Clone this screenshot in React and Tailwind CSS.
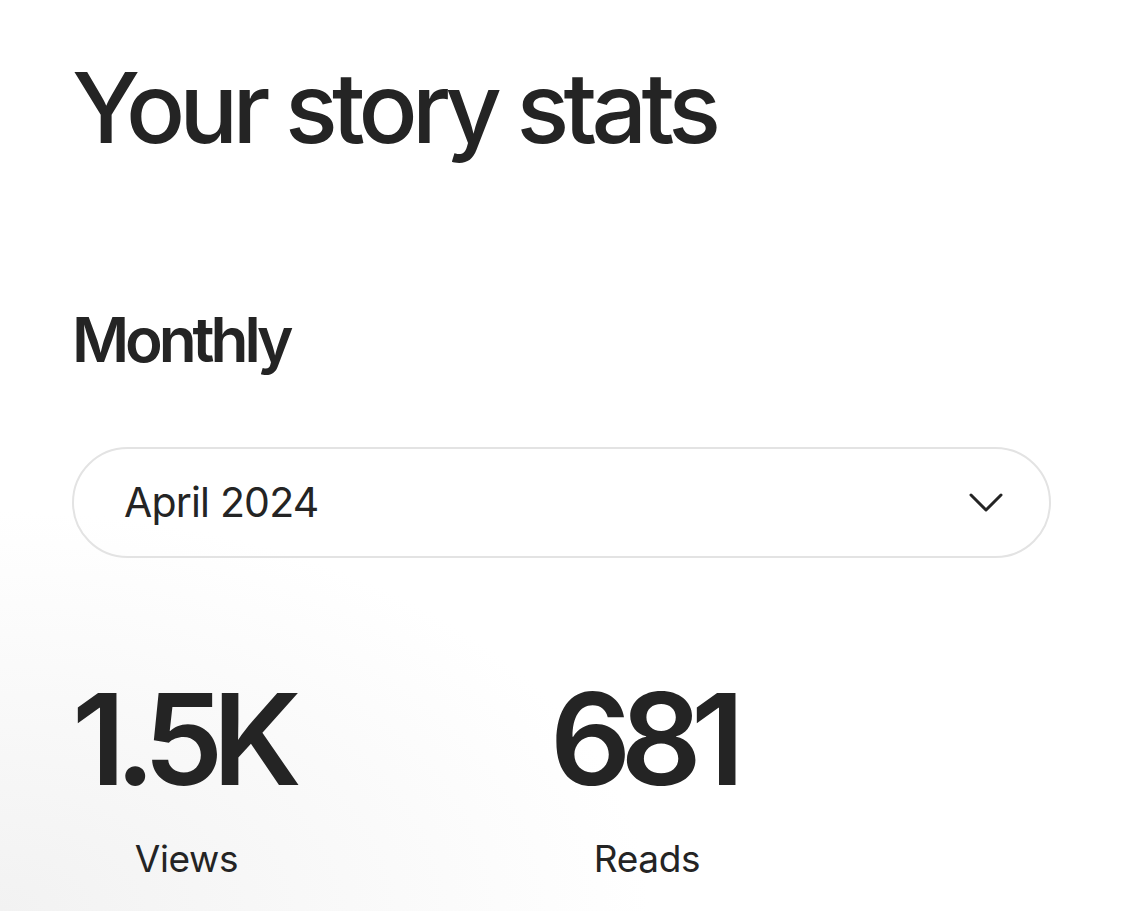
import React from 'react';

export default function App() {
  const stats = [
    { value: '1.5K', label: 'Views' },
    { value: '681', label: 'Reads' },
  ];

  return (
    <div className="w-[1125px] h-[911px] overflow-hidden bg-[radial-gradient(ellipse_650px_400px_at_0%_100%,#f2f2f2_0%,#ffffff_100%)] text-[#242424] font-['Inter',sans-serif] pl-[72px] pt-[59px]">
      <h1 className="text-[98px] leading-none font-medium tracking-[-0.059em]">Your story stats</h1>

      <h2 className="mt-[152px] text-[62px] leading-none font-semibold tracking-[-0.066em]">Monthly</h2>

      {/* Month picker */}
      <button className="mt-[76px] w-[979px] h-[111px] rounded-full border-2 border-[#e3e3e3] flex items-center justify-between pl-[50px] pr-[46px]">
        <span className="text-[41px] leading-none tracking-[-0.02em]">April 2024</span>
        <svg width="34" height="20" viewBox="0 0 34 20" fill="none" stroke="#242424" strokeWidth="3" strokeLinecap="round" strokeLinejoin="round">
          <polyline points="2,2 17,17 32,2" />
        </svg>
      </button>

      {/* Stats */}
      <div className="mt-[118px] flex gap-[249px]">
        {stats.map((s) => (
          <div key={s.label} className="flex flex-col items-center">
            <div className="text-[127px] leading-none font-semibold tracking-[-0.085em] pr-[10px]">{s.value}</div>
            <div className="mt-[37px] text-[37px] leading-none tracking-[-0.01em]">{s.label}</div>
          </div>
        ))}
      </div>
    </div>
  );
}
